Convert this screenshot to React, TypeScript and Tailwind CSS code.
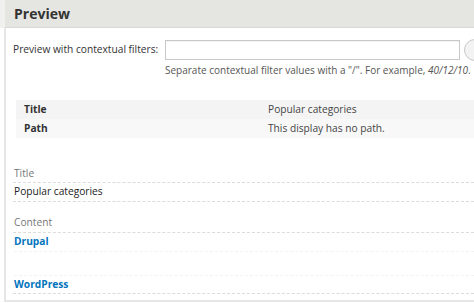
import React from "react"

export default function App() {
  return (
    <div className="w-[474px] h-[303px] overflow-hidden bg-white text-[#333] font-['Open_Sans',sans-serif]">
      {/* Header */}
      <div className="flex h-[28px] bg-[#f0f0ee]">
        <div className="w-[5px]" />
        <div className="flex flex-1 items-center bg-[#e5e5e1] pl-[9px] border-b border-[#d8d8d4]">
          <h2 className="text-[14px] font-bold leading-none">Preview</h2>
        </div>
      </div>

      <div className="ml-[4px] h-[274px] border-l-2 border-b-2 border-[#e6e6e6] pl-[7px]">
        {/* Contextual filters */}
        <div className="flex pt-[11px]">
          <label className="w-[152px] shrink-0 whitespace-nowrap pt-[3px] text-[10.2px]">
            Preview with contextual filters:
          </label>
          <div className="flex shrink-0 flex-col">
            <div className="flex items-center gap-[4px]">
              <input className="h-[20px] w-[295px] border border-[#c8c8c8] bg-white shadow-[inset_0_1px_1px_rgba(0,0,0,0.06)]" />
              <div className="h-[22px] w-[22px] rounded-full border border-[#c8c8c8] bg-[#f3f3f3]" />
            </div>
            <p className="mt-[2px] whitespace-nowrap text-[10px] text-[#555]">
              Separate contextual filter values with a "/". For example, <em>40/12/10</em>.
            </p>
          </div>
        </div>

        {/* Info table */}
        <div className="mt-[22px] ml-[3px] text-[10.2px]">
          <div className="flex h-[19px] items-center bg-[#f4f4f4]">
            <div className="w-[246px] pl-[8px] font-bold">Title</div>
            <div className="flex-1 pl-[6px] text-[#444]">Popular categories</div>
          </div>
          <div className="flex h-[19px] items-center bg-[#f8f8f8]">
            <div className="w-[246px] pl-[8px] font-bold">Path</div>
            <div className="flex-1 pl-[6px] text-[#444]">This display has no path.</div>
          </div>
        </div>

        {/* Title section */}
        <div className="mt-[28px] pl-[1px] text-[10.2px] leading-[15px] text-[#777]">Title</div>
        <div className="mt-[1px] flex h-[20px] items-center border-y border-dashed border-[#dcdcdc] pl-[1px] text-[10.2px] text-[#222]">
          Popular categories
        </div>

        {/* Content section */}
        <div className="mt-[13px] pl-[1px] text-[10.2px] leading-[15px] text-[#777]">Content</div>
        <div className="mt-[2px] border-y border-dashed border-[#dcdcdc] pl-[1px] text-[10.2px] font-bold text-[#0074bd]">
          <div className="flex h-[19px] items-center border-b border-dashed border-[#f3f3f3]">Drupal</div>
          <div className="h-[24px] border-b border-dashed border-[#f3f3f3]" />
          <div className="flex h-[17px] items-center">WordPress</div>
        </div>
      </div>
    </div>
  )
}
